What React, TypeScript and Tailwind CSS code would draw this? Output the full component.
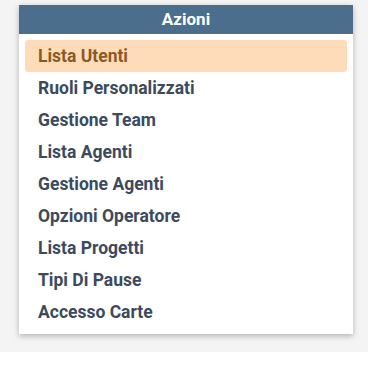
const items = [
  "Lista Utenti",
  "Ruoli Personalizzati",
  "Gestione Team",
  "Lista Agenti",
  "Gestione Agenti",
  "Opzioni Operatore",
  "Lista Progetti",
  "Tipi Di Pause",
  "Accesso Carte",
];

export default function App() {
  const active = "Lista Utenti";

  return (
    <div className="w-[368px] h-[352px] bg-[#f4f4f4] pt-[5px] pl-[19px] font-['Roboto',sans-serif]">
      <div className="w-[334px] bg-white shadow-[0_2px_6px_rgba(0,0,0,0.28)]">
        <div className="h-[29px] bg-[#4b6e8c] flex items-center justify-center text-white font-bold text-[17px]">
          Azioni
        </div>
        <ul className="px-[6px] py-[6px]">
          {items.map((item) => (
            <li
              key={item}
              className={`h-[32px] flex items-center pl-[13px] rounded-[3px] text-[17.5px] font-bold ${
                item === active ? "bg-[#ffdcb9] text-[#8a5a24]" : "text-[#3c4a5e]"
              }`}
            >
              {item}
            </li>
          ))}
        </ul>
      </div>
    </div>
  );
}
